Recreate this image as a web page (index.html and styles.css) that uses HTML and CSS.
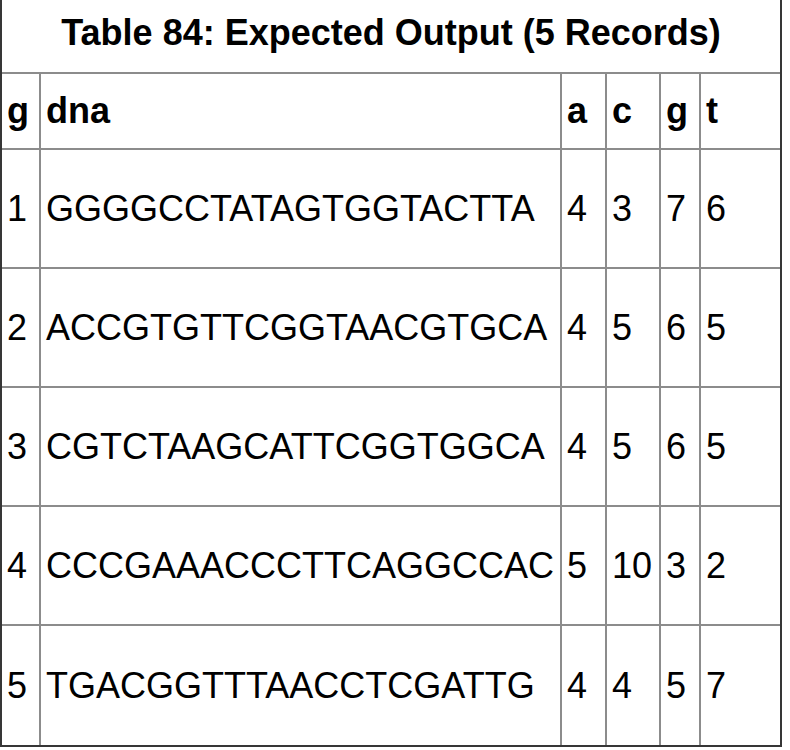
FILE: index.html
```html
<!DOCTYPE html>
<html lang="en">

<head>
    <meta charset="utf-8">
    <meta name="viewport" content="width=device-width, initial-scale=1.0">
    <title>Table 84: Expected Output</title>
    <link rel="stylesheet" href="styles.css">
</head>

<body>
    <table class="records">
        <colgroup>
            <col class="col-id">
            <col class="col-dna">
            <col class="col-a">
            <col class="col-c">
            <col class="col-g">
            <col class="col-t">
        </colgroup>
        <thead>
            <tr>
                <th class="caption" colspan="6">Table 84: Expected Output (5 Records)</th>
            </tr>
            <tr class="head">
                <th>g</th>
                <th>dna</th>
                <th>a</th>
                <th>c</th>
                <th>g</th>
                <th>t</th>
            </tr>
        </thead>
        <tbody>
            <tr>
                <td>1</td>
                <td>GGGGCCTATAGTGGTACTTA</td>
                <td>4</td>
                <td>3</td>
                <td>7</td>
                <td>6</td>
            </tr>
            <tr>
                <td>2</td>
                <td>ACCGTGTTCGGTAACGTGCA</td>
                <td>4</td>
                <td>5</td>
                <td>6</td>
                <td>5</td>
            </tr>
            <tr>
                <td>3</td>
                <td>CGTCTAAGCATTCGGTGGCA</td>
                <td>4</td>
                <td>5</td>
                <td>6</td>
                <td>5</td>
            </tr>
            <tr>
                <td>4</td>
                <td>CCCGAAACCCTTCAGGCCAC</td>
                <td>5</td>
                <td>10</td>
                <td>3</td>
                <td>2</td>
            </tr>
            <tr>
                <td>5</td>
                <td>TGACGGTTTAACCTCGATTG</td>
                <td>4</td>
                <td>4</td>
                <td>5</td>
                <td>7</td>
            </tr>
        </tbody>
    </table>
</body>

</html>
```

FILE: styles.css
```css
:root {
    --outer-color: #363636;
    --grid-color: #8c8c8c;
}

body {
    margin: 0;
    font-family: 'Liberation Sans', Arial, sans-serif;
    font-size: 36px;
    color: #000;
    background: #fff;
}

.records {
    width: 782px;
    table-layout: fixed;
    border-collapse: separate;
    border-spacing: 0;
    border: 2px solid var(--outer-color);
    border-top: none;
}

.col-id { width: 39px; }
.col-dna { width: 521px; }
.col-a { width: 45px; }
.col-c { width: 54px; }
.col-g { width: 40px; }
.col-t { width: 79px; }

th,
td {
    box-sizing: border-box;
    padding: 0 0 0 5px;
    text-align: left;
    vertical-align: middle;
    white-space: nowrap;
    line-height: 40px;
    border-right: 2px solid var(--grid-color);
    border-bottom: 2px solid var(--grid-color);
}

th:last-child,
td:last-child {
    border-right: none;
}

tbody tr:last-child td {
    border-bottom: none;
}

th {
    font-weight: bold;
}

.caption {
    height: 74px;
    padding: 0 0 6px;
    text-align: center;
}

.head th {
    height: 76px;
}

tbody td {
    height: 119px;
}

tbody tr:last-child td {
    height: 119px;
}
```
